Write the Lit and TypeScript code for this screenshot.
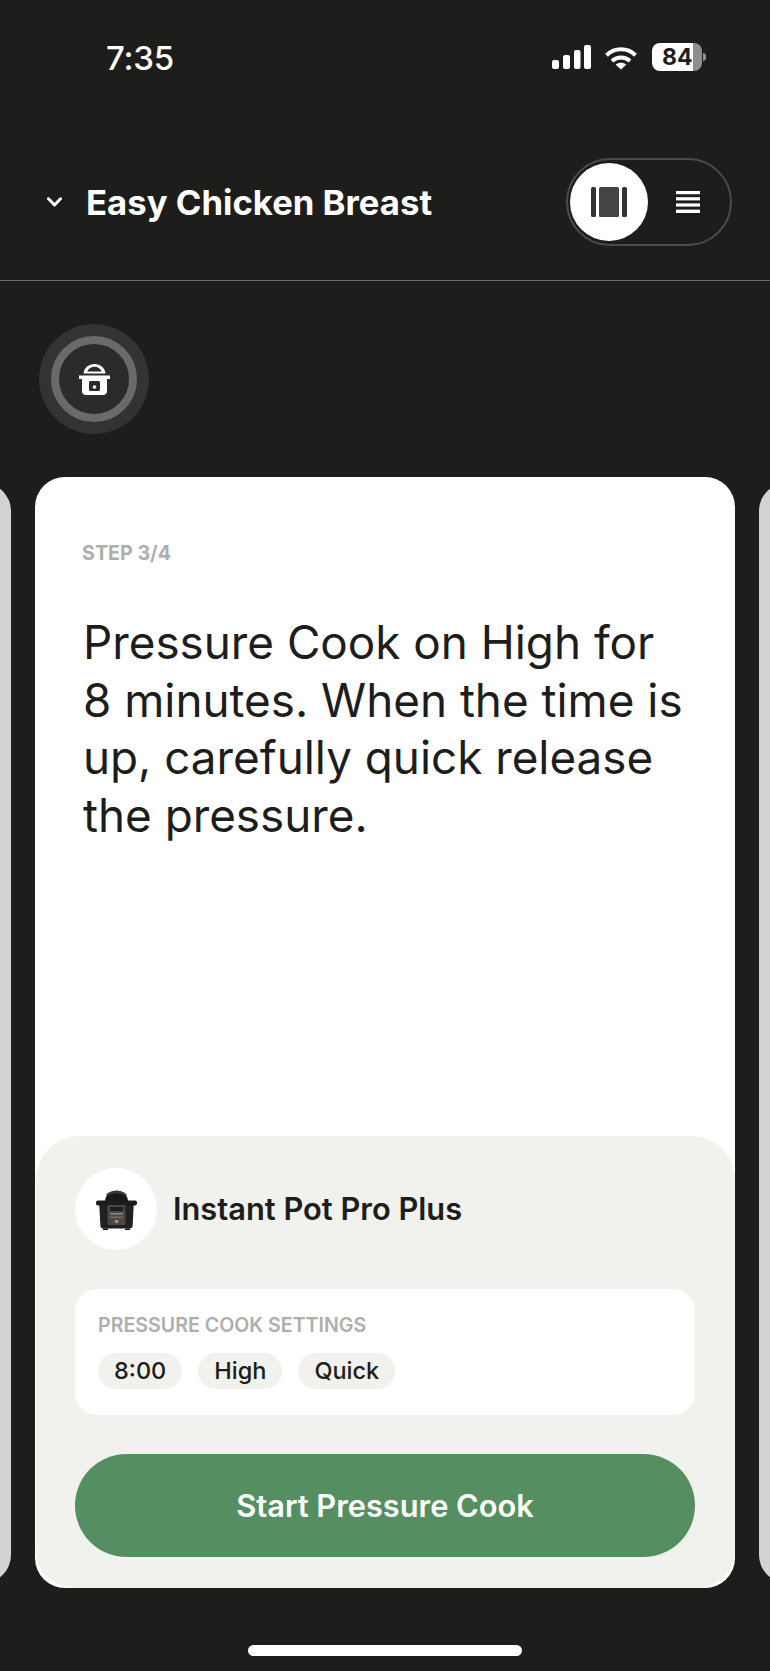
import { LitElement, html, css } from "lit";
import { customElement } from "lit/decorators.js";

@customElement("app-root")
export class AppRoot extends LitElement {
  static styles = css`
    :host {
      display: block;
      width: 770px;
      height: 1671px;
      overflow: hidden;
      background: #1d1d1b;
      color: #fff;
      font-family: Inter, "Liberation Sans", sans-serif;
    }
    .status {
      box-sizing: border-box;
      height: 124px;
      padding: 43px 64px 0 106px;
      display: flex;
      justify-content: space-between;
      align-items: flex-start;
    }
    .time {
      font-size: 33px;
      line-height: 30px;
      font-weight: 500;
      letter-spacing: -0.2px;
    }
    .status-icons {
      display: flex;
      align-items: flex-start;
    }
    .signal {
      margin-top: 2px;
      margin-right: 14px;
    }
    .wifi {
      margin-top: 4px;
      margin-right: 15px;
    }
    .battery {
      display: flex;
      align-items: center;
    }
    .battery-body {
      box-sizing: border-box;
      width: 50px;
      height: 28px;
      border-radius: 8px;
      background: linear-gradient(90deg, #fff 0 41px, #8f8f8d 41px);
      color: #1d1d1b;
      font-size: 23px;
      line-height: 28px;
      font-weight: 700;
      padding-left: 10px;
    }
    .battery-nub {
      width: 3px;
      height: 8px;
      margin-left: 1px;
      border-radius: 0 3px 3px 0;
      background: #8f8f8d;
    }
    .nav {
      box-sizing: border-box;
      height: 157px;
      padding: 0 38px 1px 47px;
      display: flex;
      align-items: center;
      border-bottom: 1px solid #6a6a68;
    }
    .chevron {
      margin-right: 24px;
    }
    .title {
      flex: 1;
      font-size: 34.7px;
      line-height: 40px;
      font-weight: 650;
    }
    .toggle {
      box-sizing: border-box;
      width: 166px;
      height: 88px;
      padding: 2px;
      border: 2px solid #4b4b49;
      border-radius: 44px;
      display: flex;
      align-items: center;
    }
    .toggle-on {
      width: 78px;
      height: 78px;
      border-radius: 50%;
      background: #fff;
      display: flex;
      align-items: center;
      justify-content: center;
    }
    .toggle-off {
      margin-left: 28px;
      display: flex;
    }
    .status-row {
      padding: 43px 0 43px 39px;
    }
    .lock-outer {
      width: 110px;
      height: 110px;
      border-radius: 50%;
      background: #333331;
      display: flex;
      align-items: center;
      justify-content: center;
    }
    .lock-ring {
      box-sizing: border-box;
      width: 86px;
      height: 86px;
      border: 8px solid #6a6a68;
      border-radius: 50%;
      background: #2b2b29;
      display: flex;
      align-items: center;
      justify-content: center;
    }
    .carousel {
      height: 1111px;
      display: flex;
      justify-content: center;
      align-items: center;
      gap: 24px;
    }
    .peek {
      flex: none;
      width: 700px;
      height: 1100px;
      border-radius: 28px;
      background: #d3d3d1;
    }
    .card {
      flex: none;
      box-sizing: border-box;
      width: 700px;
      height: 1111px;
      border-radius: 30px;
      background: #fff;
      overflow: hidden;
      display: flex;
      flex-direction: column;
      color: #1d1d1b;
    }
    .step {
      margin: 66px 47px 0;
      font-size: 19.7px;
      line-height: 20px;
      font-weight: 650;
      color: #aeaeac;
    }
    .instruction {
      margin: 51px 48px 0;
      font-size: 45.8px;
      line-height: 57.5px;
      font-weight: 400;
    }
    .panel {
      margin: auto 0 0 1px;
      box-sizing: border-box;
      height: 452px;
      padding: 32px 40px 0 39px;
      border-radius: 44px 44px 38px 38px;
      background: #f1f2ee;
    }
    .device {
      display: flex;
      align-items: center;
      gap: 16px;
    }
    .device-photo {
      width: 82px;
      height: 82px;
      border-radius: 50%;
      background: #fff;
      display: flex;
      align-items: center;
      justify-content: center;
    }
    .device-name {
      font-size: 30.8px;
      line-height: 40px;
      font-weight: 600;
    }
    .settings {
      box-sizing: border-box;
      height: 126px;
      margin-top: 39px;
      padding: 26px 23px 0;
      border-radius: 22px;
      background: #fff;
    }
    .settings-label {
      font-size: 19.6px;
      line-height: 20px;
      font-weight: 600;
      color: #aeaeac;
    }
    .chips {
      margin-top: 18px;
      display: flex;
      gap: 16px;
    }
    .chip {
      height: 36px;
      padding: 0 16px;
      border-radius: 18px;
      background: #f1f2ee;
      font-size: 23.5px;
      line-height: 36px;
      font-weight: 550;
    }
    .start {
      box-sizing: border-box;
      width: 620px;
      height: 103px;
      margin-top: 39px;
      border-radius: 52px;
      background: #558f61;
      color: #fff;
      font-size: 30.8px;
      line-height: 104px;
      font-weight: 600;
      text-align: center;
    }
    .home {
      width: 274px;
      height: 11px;
      margin: 57px auto 0;
      border-radius: 6px;
      background: #fff;
    }
  `;

  render() {
    return html`
      <div class="status">
        <div class="time">7:35</div>
        <div class="status-icons">
          <svg class="signal" width="39" height="24" viewBox="0 0 39 24" fill="#fff">
            <rect x="0" y="15" width="7" height="9" rx="2"></rect>
            <rect x="11" y="10" width="7" height="14" rx="2"></rect>
            <rect x="22" y="5" width="6.5" height="19" rx="2"></rect>
            <rect x="32" y="0" width="7" height="24" rx="2"></rect>
          </svg>
          <svg class="wifi" width="32" height="23" viewBox="0 0 32 23" fill="none" stroke="#fff" stroke-width="4">
            <path d="M1.5 8.2C9.8 0.3 22.2 0.3 30.5 8.2"></path>
            <path d="M7 14C12.2 9.3 19.8 9.3 25 14"></path>
            <path d="M16 22.6L10.6 17.6C13.8 15 18.2 15 21.4 17.6Z" fill="#fff" stroke="none"></path>
          </svg>
          <div class="battery">
            <div class="battery-body">84</div>
            <div class="battery-nub"></div>
          </div>
        </div>
      </div>

      <div class="nav">
        <svg class="chevron" width="15" height="10" viewBox="0 0 15 10" fill="none" stroke="#fff" stroke-width="3" stroke-linecap="round" stroke-linejoin="round">
          <path d="M1.5 1.8L7.5 8L13.5 1.8"></path>
        </svg>
        <div class="title">Easy Chicken Breast</div>
        <div class="toggle">
          <div class="toggle-on">
            <svg width="36" height="30" viewBox="0 0 36 30">
              <rect x="0" y="0" width="5" height="30" rx="1.5" fill="#333331"></rect>
              <rect x="8" y="0" width="20" height="30" rx="1.5" fill="#444442"></rect>
              <rect x="31" y="0" width="5" height="30" rx="1.5" fill="#333331"></rect>
            </svg>
          </div>
          <div class="toggle-off">
            <svg width="24" height="22" viewBox="0 0 24 22" fill="#fff">
              <rect y="0" width="24" height="3.2"></rect>
              <rect y="6.2" width="24" height="3.2"></rect>
              <rect y="12.4" width="24" height="3.2"></rect>
              <rect y="18.6" width="24" height="3.4"></rect>
            </svg>
          </div>
        </div>
      </div>

      <div class="status-row">
        <div class="lock-outer">
          <div class="lock-ring">
            <svg width="31" height="31" viewBox="0 0 31 31" fill="#fff">
              <path d="M4.5 9.5C5 3.6 10 0 15.5 0S26 3.6 26.5 9.5ZM8.2 7.4H22.8C21.2 4.4 18.5 2.8 15.5 2.8S9.8 4.4 8.2 7.4Z" fill-rule="evenodd"></path>
              <path d="M0 11.5H31V15H28V27C28 29.4 26.4 31 24 31H7C4.6 31 3 29.4 3 27V15H0ZM11.5 17C10.7 17 10 17.7 10 18.5V25.5C10 26.3 10.7 27 11.5 27H19.5C20.3 27 21 26.3 21 25.5V18.5C21 17.7 20.3 17 19.5 17Z" fill-rule="evenodd"></path>
              <circle cx="15.5" cy="23" r="1.8"></circle>
            </svg>
          </div>
        </div>
      </div>

      <div class="carousel">
        <div class="peek"></div>
        <div class="card">
          <div class="step">STEP 3/4</div>
          <div class="instruction">
            Pressure Cook on High for<br />8 minutes. When the time is<br />up, carefully quick release<br />the pressure.
          </div>
          <div class="panel">
            <div class="device">
              <div class="device-photo">
                <svg width="41" height="41" viewBox="0 0 41 41">
                  <path d="M9 12C9.5 5 15 1.5 20.5 1.5S31.5 5 32 12Z" fill="#181818"></path>
                  <path d="M10 6C13 0.5 28 0.5 31 6L28.5 6.5C25 3.5 16 3.5 12.5 6.5Z" fill="#3c3c3c"></path>
                  <rect x="0" y="11.5" width="41" height="5" rx="2" fill="#1c1c1c"></rect>
                  <path d="M3.3 16H37.7L36.6 37C36.5 38.5 35.5 39.5 34 39.5H7C5.5 39.5 4.5 38.5 4.4 37Z" fill="#202020"></path>
                  <rect x="11.5" y="16" width="18" height="20" rx="1" fill="#4a4846"></rect>
                  <rect x="14" y="18" width="13" height="4" fill="#1e1e1e"></rect>
                  <rect x="14" y="24" width="13" height="1.5" fill="#8a8780"></rect>
                  <rect x="14" y="27.5" width="13" height="1.5" fill="#7f6a5e"></rect>
                  <circle cx="20.5" cy="32.5" r="1.8" fill="#9a9892"></circle>
                  <rect x="7" y="39.5" width="5" height="1.5" fill="#111"></rect>
                  <rect x="29" y="39.5" width="5" height="1.5" fill="#111"></rect>
                </svg>
              </div>
              <div class="device-name">Instant Pot Pro Plus</div>
            </div>
            <div class="settings">
              <div class="settings-label">PRESSURE COOK SETTINGS</div>
              <div class="chips">
                <div class="chip">8:00</div>
                <div class="chip">High</div>
                <div class="chip">Quick</div>
              </div>
            </div>
            <div class="start">Start Pressure Cook</div>
          </div>
        </div>
        <div class="peek"></div>
      </div>

      <div class="home"></div>
    `;
  }
}
